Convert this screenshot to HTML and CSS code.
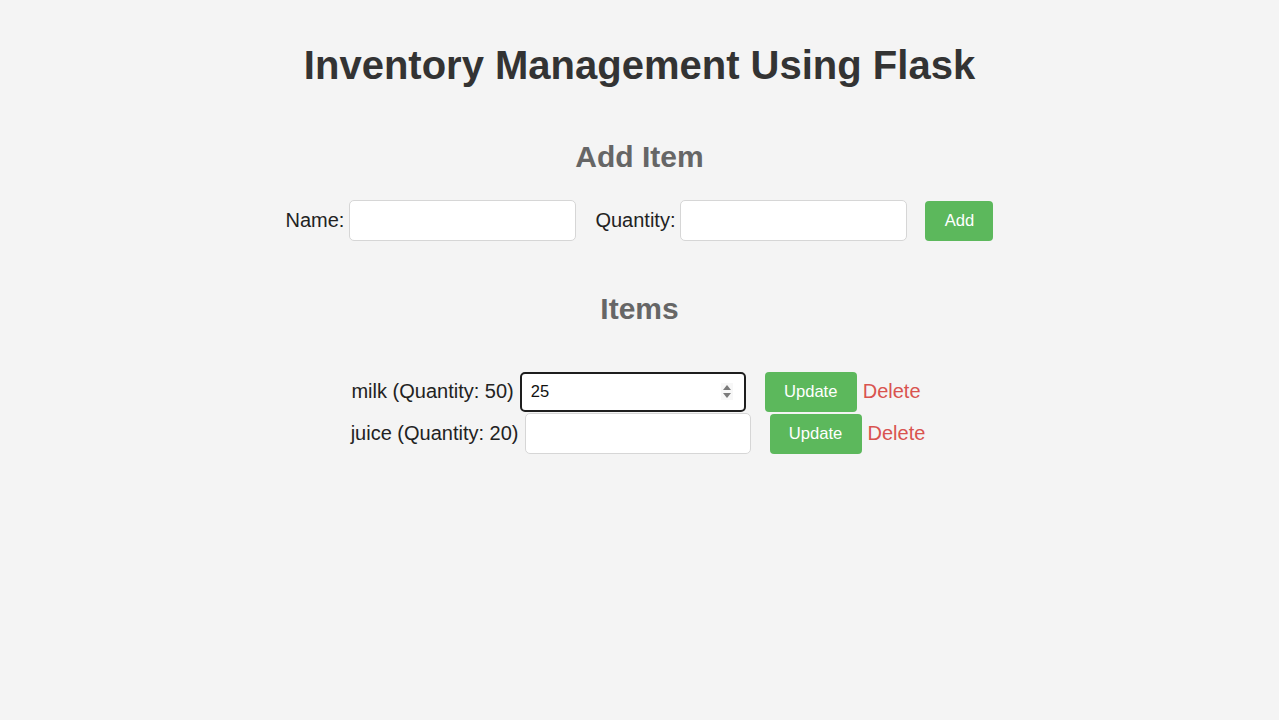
FILE: index.html
```html
<!DOCTYPE html>
<html lang="en">
<head>
<meta charset="utf-8">
<title>Inventory Management Using Flask</title>
<link rel="stylesheet" href="styles.css">
</head>
<body>
<div class="page">
  <h1 class="title">Inventory Management Using Flask</h1>
  <h2 class="section-title add-title">Add Item</h2>
  <form class="add-form">
    <label class="label" for="name">Name:</label>
    <input class="field" id="name" type="text">
    <label class="label label-qty" for="qty">Quantity:</label>
    <input class="field" id="qty" type="text">
    <button class="btn btn-add" type="button">Add</button>
  </form>
  <h2 class="section-title items-title">Items</h2>
  <div class="items">
    <div class="item item-first">
      <span class="item-text">milk (Quantity: 50)</span>
      <div class="qty-box">
        <input class="field item-field focused" type="text" value="25">
        <svg class="spinner" width="12" height="17" viewBox="0 0 12 17"><rect x="0" y="0" width="12" height="17" fill="#f7f7f7"/><path d="M2 7 L6 2 L10 7 Z" fill="#7a7a7a"/><path d="M2 10 L6 15 L10 10 Z" fill="#7a7a7a"/></svg>
      </div>
      <button class="btn btn-update" type="button">Update</button>
      <a class="delete" href="#">Delete</a>
    </div>
    <div class="item item-second">
      <span class="item-text">juice (Quantity: 20)</span>
      <div class="qty-box">
        <input class="field item-field" type="text">
      </div>
      <button class="btn btn-update" type="button">Update</button>
      <a class="delete" href="#">Delete</a>
    </div>
  </div>
</div>
</body>
</html>
```
FILE: styles.css
```css
html, body {
  margin: 0;
  padding: 0;
  background: #f4f4f4;
  font-family: "Liberation Sans", Arial, sans-serif;
  color: #222;
}
.page {
  display: flex;
  flex-direction: column;
  align-items: center;
  padding-top: 42px;
}
.title {
  margin: 0;
  font-size: 40px;
  line-height: 46px;
  font-weight: bold;
  color: #333;
}
.section-title {
  margin: 0;
  font-size: 30px;
  line-height: 34px;
  font-weight: bold;
  color: #666;
}
.add-title {
  margin-top: 52px;
}
.add-form {
  margin-top: 26px;
  display: flex;
  align-items: center;
  height: 41px;
}
.label {
  font-size: 20px;
  color: #222;
  margin-right: 5px;
}
.label-qty {
  margin-left: 19px;
}
.field {
  box-sizing: border-box;
  width: 227px;
  height: 41px;
  border: 1px solid #d6d6d6;
  border-radius: 5px;
  background: #fff;
  padding: 0 9px;
  font-family: "Liberation Sans", Arial, sans-serif;
  font-size: 16.5px;
  color: #111;
  outline: none;
}
.btn {
  box-sizing: border-box;
  height: 40px;
  border: none;
  border-radius: 4px;
  background: #5cb85c;
  color: #fff;
  font-family: "Liberation Sans", Arial, sans-serif;
  font-size: 16.6px;
  padding: 0;
  cursor: pointer;
}
.btn-add {
  width: 68px;
  margin-left: 18px;
}
.items-title {
  margin-top: 51px;
}
.items {
  margin-top: 45px;
  display: flex;
  flex-direction: column;
  align-items: center;
  gap: 1px;
}
.item {
  display: flex;
  align-items: center;
  height: 41px;
}
.item-first {
  margin-left: -7px;
}
.item-second {
  margin-left: -3px;
}
.item-text {
  font-size: 20px;
  color: #222;
  margin-right: 6px;
}
.qty-box {
  position: relative;
}
.item-field {
  width: 226px;
  height: 41px;
}
.item-field.focused {
  border: 2px solid #1e1e1e;
  padding-left: 9px;
  height: 40px;
}
.spinner {
  position: absolute;
  right: 13px;
  top: 11px;
}
.btn-update {
  width: 92px;
  margin-left: 19px;
}
.delete {
  margin-left: 6px;
  font-size: 20px;
  color: #d9534f;
  text-decoration: none;
}
```
